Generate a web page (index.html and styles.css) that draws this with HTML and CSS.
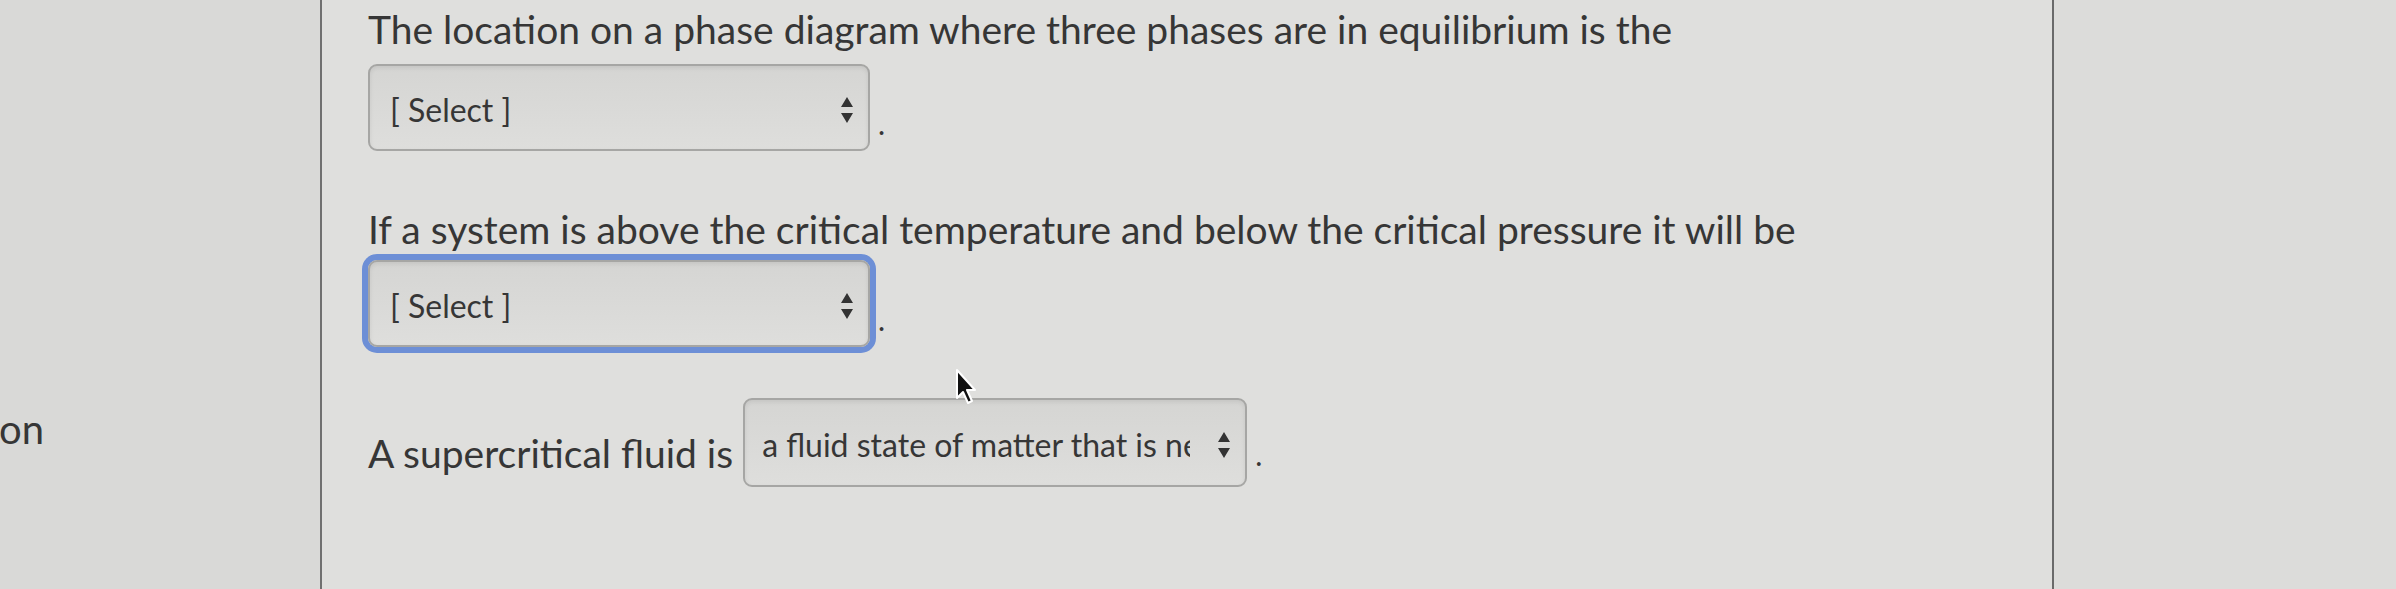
FILE: index.html
```html
<!DOCTYPE html>
<html lang="en">
<head>
    <meta charset="UTF-8">
    <title>Quiz</title>
    <link rel="stylesheet" href="styles.css">
</head>
<body>
    <div class="sidebar">
        <div class="side-label">on</div>
    </div>
    <div class="main">
        <p class="question q1">The location on a phase diagram where three phases are in equilibrium is the</p>
        <div class="answer-row row1">
            <div class="select">
                <span class="select-text">[ Select ]</span>
                <svg class="arrows" width="12" height="26" viewBox="0 0 12 26"><path d="M6 0 L12 10 L0 10 Z M0 16 L12 16 L6 26 Z" fill="#333"/></svg>
            </div>
            <span class="dot">.</span>
        </div>
        <p class="question q2">If a system is above the critical temperature and below the critical pressure it will be</p>
        <div class="answer-row row2">
            <div class="select focused">
                <span class="select-text">[ Select ]</span>
                <svg class="arrows" width="12" height="26" viewBox="0 0 12 26"><path d="M6 0 L12 10 L0 10 Z M0 16 L12 16 L6 26 Z" fill="#333"/></svg>
            </div>
            <span class="dot">.</span>
        </div>
        <div class="answer-row row3">
            <span class="inline-text">A supercritical fluid is</span>
            <div class="select">
                <span class="select-text clipped">a fluid state of matter that is near its critical point</span>
                <svg class="arrows" width="12" height="26" viewBox="0 0 12 26"><path d="M6 0 L12 10 L0 10 Z M0 16 L12 16 L6 26 Z" fill="#333"/></svg>
            </div>
            <span class="dot">.</span>
        </div>
        <svg class="cursor" width="24" height="38" viewBox="0 0 24 38"><path d="M2 2 L2 30 L8 24 L13 35 L17 33 L12 22 L20 22 Z" fill="#111" stroke="#fff" stroke-width="2" stroke-linejoin="round"/></svg>
    </div>
    <div class="aside"></div>
</body>
</html>
```

FILE: styles.css
```css
body {
    margin: 0;
    height: 589px;
    display: flex;
    overflow: hidden;
    font-family: Lato, "Noto Sans", sans-serif;
    color: #363636;
    background: #dcdcda;
}
.sidebar {
    width: 320px;
    flex-shrink: 0;
    background: #d9d9d7;
    border-right: 2px solid #707070;
}
.side-label {
    font-size: 40px;
    line-height: 46px;
    margin-top: 406px;
    margin-left: -1px;
}
.main {
    position: relative;
    width: 1684px;
    flex-shrink: 0;
    padding: 6px 0 0 46px;
    background: #dfdfdd;
    border-right: 2px solid #6a6a6a;
}
.aside {
    flex: 1;
    background: #dcdcda;
}
.question {
    margin: 0;
    font-size: 39px;
    line-height: 46px;
    white-space: nowrap;
}
.q2 {
    margin-top: 55px;
}
.answer-row {
    display: flex;
    align-items: center;
}
.row1 {
    margin-top: 12px;
}
.row2 {
    margin-top: 8px;
}
.row3 {
    margin-top: 51px;
    align-items: flex-start;
}
.select {
    box-sizing: border-box;
    width: 502px;
    height: 87px;
    display: flex;
    align-items: center;
    padding: 4px 15px 0 20px;
    border: 2px solid #a6a6a4;
    border-radius: 9px;
    background: linear-gradient(#d5d5d3, #dededc);
    box-shadow: inset 0 2px 4px rgba(0, 0, 0, 0.08);
}
.select.focused {
    box-shadow: 0 0 0 6px #6d8fd6, inset 0 2px 4px rgba(0, 0, 0, 0.08);
}
.select-text {
    flex: 1;
    font-size: 32px;
    white-space: nowrap;
    overflow: hidden;
}
.select-text.clipped {
    flex: none;
    width: 428px;
    margin-right: 28px;
    font-size: 32px;
}
.arrows {
    flex-shrink: 0;
}
.dot {
    font-size: 30px;
    margin-left: 8px;
    padding-top: 30px;
}
.row3 .select {
    width: 504px;
    height: 89px;
    padding-left: 17px;
}
.row3 .dot {
    padding-top: 38px;
    margin-left: 8px;
}
.inline-text {
    font-size: 39px;
    line-height: 46px;
    margin-top: 32px;
    margin-right: 10px;
}
.cursor {
    position: absolute;
    left: 633px;
    top: 368px;
}
```
